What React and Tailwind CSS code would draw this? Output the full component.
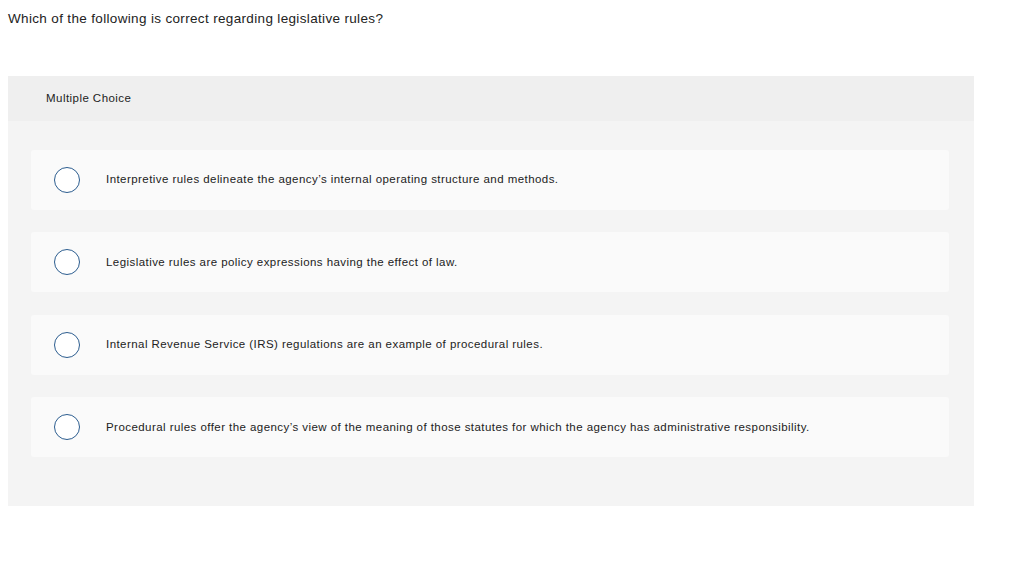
const options = [
  "Interpretive rules delineate the agency\u2019s internal operating structure and methods.",
  "Legislative rules are policy expressions having the effect of law.",
  "Internal Revenue Service (IRS) regulations are an example of procedural rules.",
  "Procedural rules offer the agency\u2019s view of the meaning of those statutes for which the agency has administrative responsibility.",
];

export default function App() {
  return (
    <main
      className="min-h-screen bg-white text-[#222] pt-[11px]"
      style={{ fontFamily: '"Liberation Sans", Arial, sans-serif' }}
    >
      <p className="px-2 text-[13.5px] leading-[16px] tracking-[0.34px]">
        Which of the following is correct regarding legislative rules?
      </p>

      <section className="ml-2 mt-[49px] w-[966px] bg-[#f4f4f4] pb-[49px]">
        <div className="h-[45px] bg-[#efefef] pl-[38px] pt-[1px] flex items-center text-[11.5px] tracking-[0.45px] text-[#222]">
          Multiple Choice
        </div>

        <div className="mt-[29px] ml-[23px] mr-[25px] flex flex-col gap-[22.4px]">
          {options.map((opt) => (
            <label
              key={opt}
              className="h-[60px] rounded-[3px] bg-[#fafafa] flex items-center"
            >
              <span className="ml-[23px] w-[26px] h-[26px] rounded-full border-[1.5px] border-[#2c5d8f] bg-white shrink-0" />
              <span className="ml-[26px] text-[11.5px] tracking-[0.44px] text-[#222]">{opt}</span>
            </label>
          ))}
        </div>
      </section>
    </main>
  );
}
